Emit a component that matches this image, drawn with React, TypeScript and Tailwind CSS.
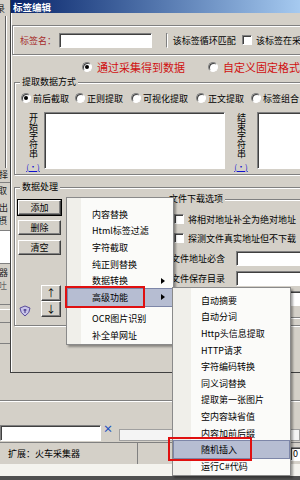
import React from "react";

const sunken =
  "border border-t-[#808080] border-l-[#808080] border-r-white border-b-white bg-white shadow-[inset_1px_1px_0_#404040]";
const raised =
  "bg-[#d4d0c8] border border-t-white border-l-white border-r-[#404040] border-b-[#404040] shadow-[inset_-1px_-1px_0_#808080]";

function Radio({ checked = false }: { checked?: boolean }) {
  return (
    <span className="flex h-[10px] w-[10px] shrink-0 items-center justify-center rounded-full border border-t-[#808080] border-l-[#808080] border-r-white border-b-white bg-white shadow-[inset_1px_1px_0_#404040]">
      {checked && <span className="h-[4px] w-[4px] rounded-full bg-black" />}
    </span>
  );
}

function Check() {
  return (
    <span className="h-[10px] w-[10px] shrink-0 border border-t-[#808080] border-l-[#808080] border-r-white border-b-white bg-white shadow-[inset_1px_1px_0_#404040]" />
  );
}

function VLabel({ text }: { text: string }) {
  return (
    <div className="flex w-[14px] flex-col items-center">
      <span className="h-[46px] text-[9px] leading-[12px] [writing-mode:vertical-rl]">{text}</span>
      <span className="mt-[4px] text-[8px] leading-[8px] text-[#1010d0] underline">(•)</span>
    </div>
  );
}

function MenuItem({
  label,
  sub = false,
  active = false,
  pl = "pl-[24px]",
}: {
  label: string;
  sub?: boolean;
  active?: boolean;
  pl?: string;
}) {
  return (
    <div
      className={
        "relative mx-[1px] flex h-[16.6px] items-center " +
        pl +
        (active ? " bg-[#b6bdd2] outline outline-1 outline-[#7d86a8]" : "")
      }
    >
      <span>{label}</span>
      {sub && (
        <span className="absolute right-[7px] top-1/2 h-0 w-0 -translate-y-1/2 border-y-[3px] border-l-[4px] border-y-transparent border-l-black" />
      )}
    </div>
  );
}

export default function App() {
  return (
    <div className="relative h-[480px] w-[300px] overflow-hidden bg-[#d4d0c8] font-['Noto_Sans_CJK_SC','Noto_Sans',sans-serif] text-[9px] leading-none text-black">
      {/* upper area: background window strip + dialog */}
      <div className="flex h-[373px]">
        {/* background window fragments */}
        <div className="flex w-[10px] shrink-0 flex-col overflow-hidden text-[#222]">
          <div className="ml-[-4px] mt-[4px] h-[12px]">录</div>
          <div className="flex h-[152px]">
            <div className="ml-[5px] w-[1px] bg-[#606060]" />
            <div className="w-[1px] bg-white" />
          </div>
          <div className="ml-[-1px] h-[14px] pt-[2px]">择</div>
          <div className="h-[1px] bg-[#808080]" />
          <div className="ml-[-2px] h-[18px] pt-[3px]">取</div>
          <div className="ml-[-1px] h-[15px] pt-[2px]">出</div>
          <div className="ml-[-2px] h-[14px]">摂</div>
          <div className="h-[34px] border-y border-[#808080] bg-white" />
          <div className="ml-[-1px] h-[14px] pt-[4px]">器</div>
          <div className="ml-[-2px] h-[16px] pt-[3px] text-[#666]">吐</div>
          <div className="mt-[10px] h-[1px] bg-[#808080]" />
          <div className="mt-[4px] h-[1px] bg-white" />
          <div className="mt-[12px] h-[1px] bg-[#808080]" />
          <div className="mt-[20px] h-[1px] bg-[#808080]" />
        </div>

        {/* dialog */}
        <div className="flex min-w-0 flex-1 flex-col border-b border-l border-[#404040] shadow-[inset_1px_0_0_#fff]">
          {/* title bar */}
          <div className="flex h-[13px] shrink-0 items-center bg-gradient-to-r from-[#0a246a] to-[#a6caf0] pl-[2px] pt-[2px] text-[9.5px] font-bold text-white">
            标签编辑
          </div>

          {/* body */}
          <div className="flex min-w-0 flex-1 flex-col overflow-hidden">
            {/* tag name panel */}
            <div className="ml-[1px] mr-[-20px] mt-[12px] flex h-[30px] items-center border border-[#808080] pl-[7px] shadow-[inset_1px_1px_0_#fff,1px_1px_0_#fff]">
              <span className="w-[39px] text-[#a52a2a]">标签名：</span>
              <div className={sunken + " h-[15px] w-[94px]"} />
              <span className="ml-[14px]">
                <Check />
              </span>
              <span className="ml-[5px] w-[70px] whitespace-nowrap">该标签循环匹配</span>
              <Check />
              <span className="ml-[4px] whitespace-nowrap">该标签在采集时</span>
            </div>

            {/* source radios */}
            <div className="mt-[6px] flex h-[12px] items-center whitespace-nowrap pl-[71px] text-[11px] text-[#d01010]">
              <Radio checked />
              <span className="ml-[5px] w-[115px]">通过采集得到数据</span>
              <Radio />
              <span className="ml-[5px]">自定义固定格式</span>
            </div>

            {/* 提取数据方式 */}
            <fieldset className="ml-[3px] mr-[-20px] mt-[4px] border border-[#808080] pb-[5px] shadow-[inset_1px_1px_0_#fff,1px_1px_0_#fff]">
              <legend className="ml-[5px] bg-[#d4d0c8] px-[2px] leading-[10px]">提取数据方式</legend>
              <div className="mt-[6px] flex h-[10px] items-center whitespace-nowrap pl-[6px]">
                <div className="flex w-[54px] items-center">
                  <Radio checked />
                  <span className="ml-[2px]">前后截取</span>
                </div>
                <div className="flex w-[56px] items-center">
                  <Radio />
                  <span className="ml-[2px]">正则提取</span>
                </div>
                <div className="flex w-[65px] items-center">
                  <Radio />
                  <span className="ml-[2px]">可视化提取</span>
                </div>
                <div className="flex w-[55px] items-center">
                  <Radio />
                  <span className="ml-[2px]">正文提取</span>
                </div>
                <div className="flex items-center">
                  <Radio />
                  <span className="ml-[2px]">标签组合</span>
                </div>
              </div>
              <div className="mt-[9px] flex h-[57px]">
                <div className="ml-[11px] mt-[1px]">
                  <VLabel text="开始字符串" />
                </div>
                <div className={sunken + " ml-[4px] w-[181px]"} />
                <div className="ml-[9px] mt-[1px]">
                  <VLabel text="结束字符串" />
                </div>
                <div className={sunken + " ml-[9px] w-[80px]"} />
              </div>
            </fieldset>

            {/* 数据处理 */}
            <fieldset className="ml-[3px] mr-[-20px] mt-[7px] h-[144px] border border-[#808080] shadow-[inset_1px_1px_0_#fff,1px_1px_0_#fff]">
              <legend className="ml-[5px] bg-[#d4d0c8] px-[2px] leading-[10px]">数据处理</legend>
              <div className="mt-[2px] flex">
                <div className="ml-[3px] flex w-[45px] flex-col">
                  <div className={raised + " mt-[6px] flex h-[15px] w-[43px] items-center justify-center outline outline-1 outline-black"}>
                    添加
                  </div>
                  <div className={raised + " mt-[5px] flex h-[15px] w-[43px] items-center justify-center"}>删除</div>
                  <div className={raised + " mt-[5px] flex h-[15px] w-[43px] items-center justify-center"}>清空</div>
                  <div className="mt-[30px] flex">
                    <svg className="ml-[1px] mt-[20px]" width="12" height="12" viewBox="0 0 12 12">
                      <path d="M6 1 L11 3 Q11 8 6 11 Q1 8 1 3 Z" fill="#c8c4e8" stroke="#5a4c9a" strokeWidth="1" />
                      <path d="M6 4 v4 M4.5 5 h3" stroke="#3a2a80" strokeWidth="1" />
                    </svg>
                    <div className="ml-[10px] flex flex-col">
                      <div className={raised + " flex h-[16px] w-[20px] items-center justify-center text-[10px]"}>↑</div>
                      <div className={raised + " flex h-[16px] w-[20px] items-center justify-center text-[10px]"}>↓</div>
                    </div>
                  </div>
                </div>
                <div className={sunken + " ml-[4px] mt-[5px] h-[80px] w-[88px]"} />

                {/* 文件下载选项 */}
                <fieldset className="ml-[6px] h-[124px] flex-1 border border-[#808080] shadow-[inset_1px_1px_0_#fff,1px_1px_0_#fff]">
                  <legend className="ml-[5px] bg-[#d4d0c8] px-[2px] leading-[10px]">文件下载选项</legend>
                  <div className="ml-[12px] mt-[10px] flex items-center whitespace-nowrap">
                    <Check />
                    <span className="ml-[4px]">将相对地址补全为绝对地址</span>
                  </div>
                  <div className="ml-[12px] mt-[9px] flex items-center whitespace-nowrap">
                    <Check />
                    <span className="ml-[4px]">探测文件真实地址但不下载</span>
                  </div>
                  <div className="ml-[9px] mt-[8px] flex items-center">
                    <span className="w-[65px]">文件地址必含</span>
                    <div className={sunken + " h-[15px] flex-1"} />
                  </div>
                  <div className="ml-[9px] mt-[5px] flex items-center">
                    <span className="w-[65px]">文件保存目录</span>
                    <div className={sunken + " h-[15px] flex-1"} />
                  </div>
                  <div className="ml-[9px] mt-[5px] flex items-center">
                    <span className="w-[65px]"></span>
                    <div className={sunken + " h-[15px] flex-1"} />
                  </div>
                </fieldset>
              </div>
            </fieldset>
          </div>
        </div>
      </div>

      {/* main window below */}
      <div className="flex h-[107px] flex-col">
        <div className="h-[27px]" />
        <div className="h-[1px] bg-[#808080]" />
        <div className="h-[1px] bg-white" />
        <div className="flex h-[40px] items-start pt-[23px]">
          <div className={sunken + " h-[16px] w-[101px]"} />
          <span className="ml-[2px] mt-[-1px] text-[10px] font-bold text-[#2050c0]">×</span>
          <div className="ml-[6px] mt-[4px] h-[12px] flex-1 border border-[#a0a0a0] bg-[#f4f4f4]" />
        </div>
        <div className="flex h-[22px] items-center border-t border-[#808080]">
          <div className="flex h-full w-[138px] items-center border-r border-[#808080] pl-[8px]">扩展：火车采集器</div>
          <div className="flex-1" />
          <div className={sunken + " mr-[-4px] flex h-[14px] w-[14px] items-center pl-[2px]"}>0</div>
        </div>
        <div className="h-[12px] bg-[#f4f3ee]" />
        <div className="flex-1 bg-[#505050]" />
      </div>

      {/* context menu */}
      <div className="absolute left-[66px] top-[197px] flex h-[148px] w-[108px] flex-col border border-[#8a8a8a] bg-[#fbfbf9] pt-[8px] shadow-[2px_2px_2px_rgba(0,0,0,0.35)]">
        <div className="absolute bottom-0 left-0 top-0 w-[14px] bg-[#f0efea]" />
        <MenuItem label="内容替换" />
        <MenuItem label="Html标签过滤" />
        <MenuItem label="字符截取" />
        <MenuItem label="纯正则替换" />
        <MenuItem label="数据转换" sub />
        <MenuItem label="高级功能" sub active />
        <div className="h-[5px]" />
        <MenuItem label="OCR图片识别" />
        <MenuItem label="补全单网址" />
      </div>

      {/* submenu */}
      <div className="absolute left-[172px] top-[287px] flex h-[189px] w-[119px] flex-col border border-[#8a8a8a] bg-[#fbfbf9] pt-[4px] shadow-[2px_2px_2px_rgba(0,0,0,0.35)]">
        <div className="absolute bottom-0 left-0 top-0 w-[18px] bg-[#f0efea]" />
        <MenuItem label="自动摘要" pl="pl-[27px]" />
        <MenuItem label="自动分词" pl="pl-[27px]" />
        <MenuItem label="Http头信息提取" pl="pl-[27px]" />
        <MenuItem label="HTTP请求" pl="pl-[27px]" />
        <MenuItem label="字符编码转换" pl="pl-[27px]" />
        <MenuItem label="同义词替换" pl="pl-[27px]" />
        <MenuItem label="提取第一张图片" pl="pl-[27px]" />
        <MenuItem label="空内容缺省值" pl="pl-[27px]" />
        <MenuItem label="内容加前后缀" pl="pl-[27px]" />
        <MenuItem label="随机插入" pl="pl-[27px]" active />
        <MenuItem label="运行C#代码" pl="pl-[27px]" />
      </div>

      {/* red highlight boxes */}
      <div className="absolute left-[65px] top-[286px] h-[22px] w-[80px] border-2 border-[#e01010]" />
      <div className="absolute left-[168px] top-[437px] h-[24px] w-[84px] border-2 border-[#e01010]" />
    </div>
  );
}
